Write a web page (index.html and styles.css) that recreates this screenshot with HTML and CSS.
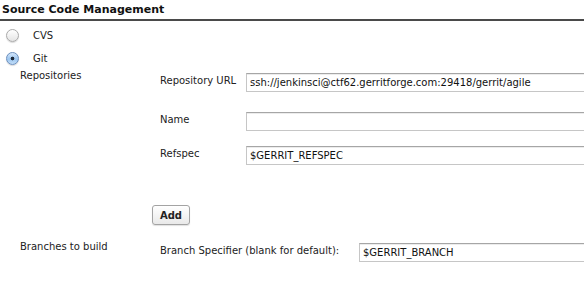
FILE: index.html
```html
<!DOCTYPE html>
<html lang="en">
<head>
    <meta charset="UTF-8">
    <title>Source Code Management</title>
    <link rel="stylesheet" href="styles.css">
</head>
<body>
    <div class="section">
        <div class="section-header">Source Code Management</div>

        <label class="radio-row first">
            <span class="radio"></span>
            <span>CVS</span>
        </label>
        <label class="radio-row">
            <span class="radio checked"></span>
            <span>Git</span>
        </label>

        <div class="scm-row repos">
            <div class="scm-label">Repositories</div>
            <div class="scm-body">
                <div class="repo-field url">
                    <span class="field-label">Repository URL</span>
                    <div class="text-input">ssh://jenkinsci@ctf62.gerritforge.com:29418/gerrit/agile</div>
                </div>
                <div class="repo-field name">
                    <span class="field-label">Name</span>
                    <div class="text-input"></div>
                </div>
                <div class="repo-field refspec">
                    <span class="field-label">Refspec</span>
                    <div class="text-input">$GERRIT_REFSPEC</div>
                </div>
                <div class="add-row">
                    <button class="add-button" type="button">Add</button>
                </div>
            </div>
        </div>

        <div class="scm-row branches">
            <div class="scm-label">Branches to build</div>
            <div class="branch-field">
                <span class="field-label wide">Branch Specifier (blank for default):</span>
                <div class="text-input">$GERRIT_BRANCH</div>
            </div>
        </div>
    </div>
</body>
</html>
```

FILE: styles.css
```css
* {
    margin: 0;
    padding: 0;
    box-sizing: border-box;
}

body {
    width: 584px;
    height: 281px;
    overflow: hidden;
    background-color: #fff;
    font-family: "DejaVu Sans", Verdana, sans-serif;
    font-size: 10px;
    color: #222;
}

.section-header {
    padding: 4px 2px 3px;
    line-height: 12px;
    font-size: 11px;
    font-weight: bold;
    color: #111;
    border-bottom: 2px solid #4a4a4a;
}

/* radio buttons */
.radio-row {
    display: flex;
    align-items: center;
    height: 23px;
    padding-left: 6px;
    font-size: 10px;
}

.radio-row.first {
    margin-top: 3px;
}

.radio {
    width: 13px;
    height: 13px;
    margin-right: 14px;
    border-radius: 50%;
    border: 1px solid #a9a9a9;
    background: linear-gradient(#ffffff, #e4e4e4);
    box-shadow: 0 1px 1px rgba(0, 0, 0, 0.15);
}

.radio.checked {
    border-color: #6b8fbe;
    background: radial-gradient(circle, #1d2a3a 0, #1d2a3a 1.5px, transparent 2.2px),
                linear-gradient(#d5e7fb, #9cc6ef 55%, #c2ddf8);
}

/* rows with a label column on the left */
.scm-row {
    display: flex;
    padding-left: 20px;
}

.scm-label {
    width: 140px;
    flex-shrink: 0;
    line-height: 12px;
}

.scm-body {
    flex: 1;
    min-width: 0;
    padding-top: 3px;
}

.repo-field,
.branch-field {
    display: flex;
    align-items: flex-start;
}

.branch-field {
    flex: 1;
    min-width: 0;
    margin-top: 2px;
}

.repo-field.url {
    margin-bottom: 20px;
}

.repo-field.name {
    margin-bottom: 15px;
}

.field-label {
    width: 86px;
    flex-shrink: 0;
    padding-top: 2px;
    line-height: 12px;
}

.field-label.wide {
    width: 199px;
}

/* the inputs run on past the right edge of the window */
.text-input {
    flex: 1;
    min-width: 0;
    height: 19px;
    padding: 1px 3px 0;
    line-height: 16px;
    white-space: nowrap;
    overflow: hidden;
    border: 1px solid #c6c6c6;
    border-top-color: #a6a6a6;
    border-right: none;
    box-shadow: inset 0 1px 0 #ececec;
    color: #111;
}

.add-row {
    padding-top: 40px;
    margin-left: -8px;
}

.add-button {
    width: 38px;
    height: 20px;
    border: 1px solid #a3a3a3;
    border-radius: 3px;
    background: linear-gradient(#ffffff, #e9e9e9);
    box-shadow: 0 1px 1px rgba(0, 0, 0, 0.12);
    font-family: "DejaVu Sans", Verdana, sans-serif;
    font-size: 10px;
    font-weight: 600;
    color: #222;
}

.scm-row.branches {
    margin-top: 16px;
}
```
